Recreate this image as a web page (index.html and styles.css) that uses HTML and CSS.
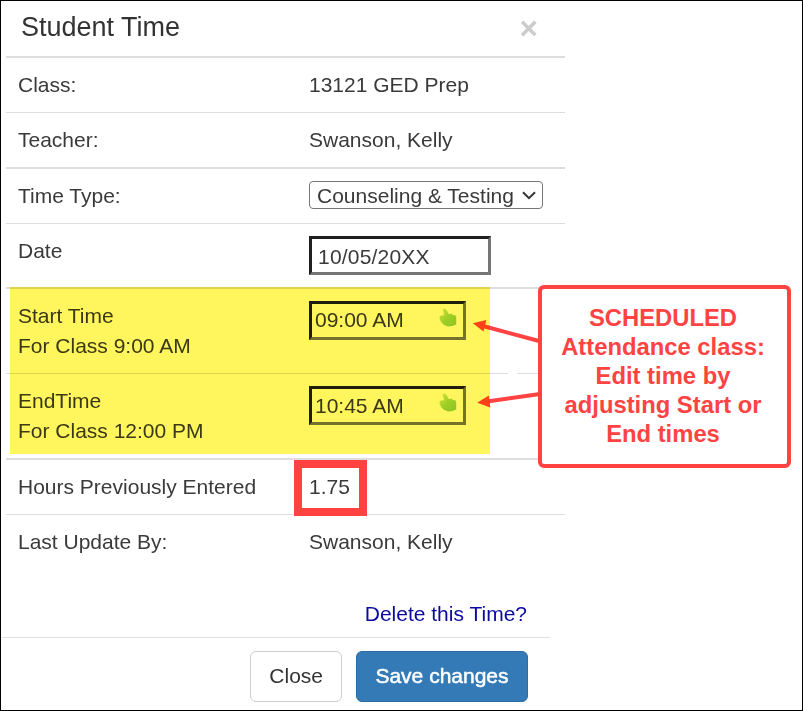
FILE: index.html
```
<!DOCTYPE html>
<html lang="en">
  <head>
    <meta charset="UTF-8" />
    <meta name="viewport" content="width=device-width, initial-scale=1" />
    <title>Student Time</title>
    <link rel="stylesheet" href="styles.css">
  </head>
  <body>
    <div class="page">
      <div class="dialog">
        <div class="dialog-header">
          <h4>Student Time</h4>
          <span class="close">&times;</span>
        </div>

        <div class="details">
          <div class="row thick">
            <div class="name">Class:</div>
            <div>13121 GED Prep</div>
          </div>
          <div class="row">
            <div class="name">Teacher:</div>
            <div>Swanson, Kelly</div>
          </div>
          <div class="row thick">
            <div class="name">Time Type:</div>
            <div class="select">
              <span>Counseling &amp; Testing</span>
              <svg width="14" height="9" viewBox="0 0 14 9"><path d="M1 1.2 L7 7.2 L13 1.2" fill="none" stroke="#333" stroke-width="2" /></svg>
            </div>
          </div>
          <div class="row">
            <div class="name">Date</div>
            <div class="input date">10/05/20XX</div>
          </div>
          <div class="row thick">
            <div class="name">Start Time<br>For Class 9:00 AM</div>
            <div class="input time">
              <span>09:00 AM</span>
              <svg class="thumb" width="18" height="19" viewBox="0 0 18 19"><use href="#thumb" /></svg>
            </div>
          </div>
          <div class="row">
            <div class="name">EndTime<br>For Class 12:00 PM</div>
            <div class="input time end">
              <span>10:45 AM</span>
              <svg class="thumb" width="18" height="19" viewBox="0 0 18 19"><use href="#thumb" /></svg>
            </div>
          </div>
          <div class="row thick">
            <div class="name">Hours Previously Entered</div>
            <div>1.75</div>
          </div>
          <div class="row last">
            <div class="name">Last Update By:</div>
            <div>Swanson, Kelly</div>
          </div>
        </div>

        <div class="delete"><a href="#">Delete this Time?</a></div>

        <div class="dialog-footer">
          <button type="button" class="btn">Close</button>
          <button type="button" class="btn btn-primary">Save changes</button>
        </div>
      </div>

      <!-- annotations -->
      <svg class="arrows" width="803" height="711" viewBox="0 0 803 711">
        <defs>
          <linearGradient id="green" x1="0" y1="0" x2="1" y2="1">
            <stop offset="0" stop-color="#d2ec9a" />
            <stop offset="0.5" stop-color="#9ed868" />
            <stop offset="1" stop-color="#8ccb62" />
          </linearGradient>
          <path id="thumb" fill="url(#green)" d="M3.6 1.4 Q5 0 6.4 1 Q9 3.4 10 6.2 L12.4 5.6 L14 7 L16.2 7.2 L17.2 9 L17.2 16.6 Q13 18.8 9 18.6 Q5 17.8 2.4 14.4 L0.8 11.6 L0.6 8.6 L2 7.4 L5 7.2 Q5 4.4 3.6 1.4 Z" />
        </defs>
        <rect x="508" y="372" width="9" height="3" fill="#fff" />
        <path d="M483 326 L540 341.3" stroke="#ff4343" stroke-width="4" />
        <path d="M472.8 323.2 L486.3 320 L483.6 331.6 Z" fill="#ff4343" />
        <path d="M487 401.6 L540 394" stroke="#ff4343" stroke-width="4" />
        <path d="M477.2 402.8 L488.8 395.6 L490.3 407.4 Z" fill="#ff4343" />
      </svg>
      <div class="highlight"></div>
      <div class="hours-box"></div>
      <div class="callout">SCHEDULED<br>Attendance class:<br>Edit time by<br>adjusting Start or<br>End times</div>
    </div>
  </body>
</html>
```

FILE: styles.css
```
* {
  box-sizing: border-box;
}
body {
  margin: 0;
  font-family: "Liberation Sans", Arial, sans-serif;
  font-size: 21px;
  line-height: 30px;
  color: #3a3a3a;
  background-color: #fff;
}
.page {
  position: relative;
  width: 803px;
  height: 711px;
  border: 1px solid #000;
  overflow: hidden;
}
.dialog {
  width: 564px;
}
.dialog-header {
  display: flex;
  justify-content: space-between;
  align-items: center;
  height: 55px;
  padding: 0 27px 4px 20px;
}
h4 {
  margin: 0;
  font-size: 27px;
  font-weight: normal;
  color: #333;
}
.close {
  padding-top: 2px;
  font-size: 31.5px;
  font-weight: bold;
  color: #ccc;
}
.details {
  margin-left: 5px;
}
.row {
  display: grid;
  grid-template-columns: 291px 1fr;
  align-items: start;
  justify-items: start;
  padding: 12px;
  border-top: 1px solid #ddd;
}
.row.thick {
  border-top-width: 2px;
}
.select {
  display: flex;
  justify-content: space-between;
  align-items: center;
  width: 234px;
  height: 28px;
  margin-bottom: 2px;
  padding: 2px 6px 0 7px;
  border: 1px solid #767676;
  border-radius: 4px;
}
.select svg {
  margin-top: -2px;
}
.input {
  height: 39px;
  border: 3px solid;
  border-color: #1f1f1f #767676 #767676 #1f1f1f;
}
.date {
  width: 182px;
  padding: 3px 6px;
  letter-spacing: 0.2px;
}
.time {
  display: flex;
  justify-content: space-between;
  width: 157px;
  padding: 1px 6px 0 3px;
}
.time.end {
  padding-top: 2px;
}
.thumb {
  margin-top: 3px;
}
.end .thumb {
  margin-top: 2px;
}
.delete {
  height: 68px;
  padding: 30px 38px 0 0;
  text-align: right;
}
.delete a {
  color: #0a0aa0;
  text-decoration: none;
}
.dialog-footer {
  display: flex;
  justify-content: flex-end;
  gap: 14px;
  width: 549px;
  padding: 13px 22px 0 0;
  border-top: 1px solid #e0e0e0;
}
.btn {
  height: 51px;
  padding: 0 18px 2px;
  font-family: inherit;
  font-size: 21px;
  color: #333;
  background-color: #fff;
  border: 1px solid #ccc;
  border-radius: 6px;
}
.btn-primary {
  width: 172px;
  color: #fff;
  background-color: #337ab7;
  border-color: #2e6da4;
  -webkit-text-stroke: 0.5px #fff;
}

/* annotations drawn over the dialog */
.arrows {
  position: absolute;
  top: -1px;
  left: -1px;
}
.highlight {
  position: absolute;
  top: 286px;
  left: 9px;
  width: 480px;
  height: 167px;
  background-color: #fff55c;
  mix-blend-mode: multiply;
}
.hours-box {
  position: absolute;
  top: 459px;
  left: 293px;
  width: 73px;
  height: 56px;
  border: 8px solid #ff4343;
}
.callout {
  position: absolute;
  top: 284px;
  left: 537px;
  width: 253px;
  height: 183px;
  padding: 14px 3px 0 0;
  border: 4px solid #ff4343;
  border-radius: 6px;
  background-color: #fff;
  color: #ff4343;
  font-size: 23.8px;
  font-weight: bold;
  line-height: 29px;
  text-align: center;
}
```
